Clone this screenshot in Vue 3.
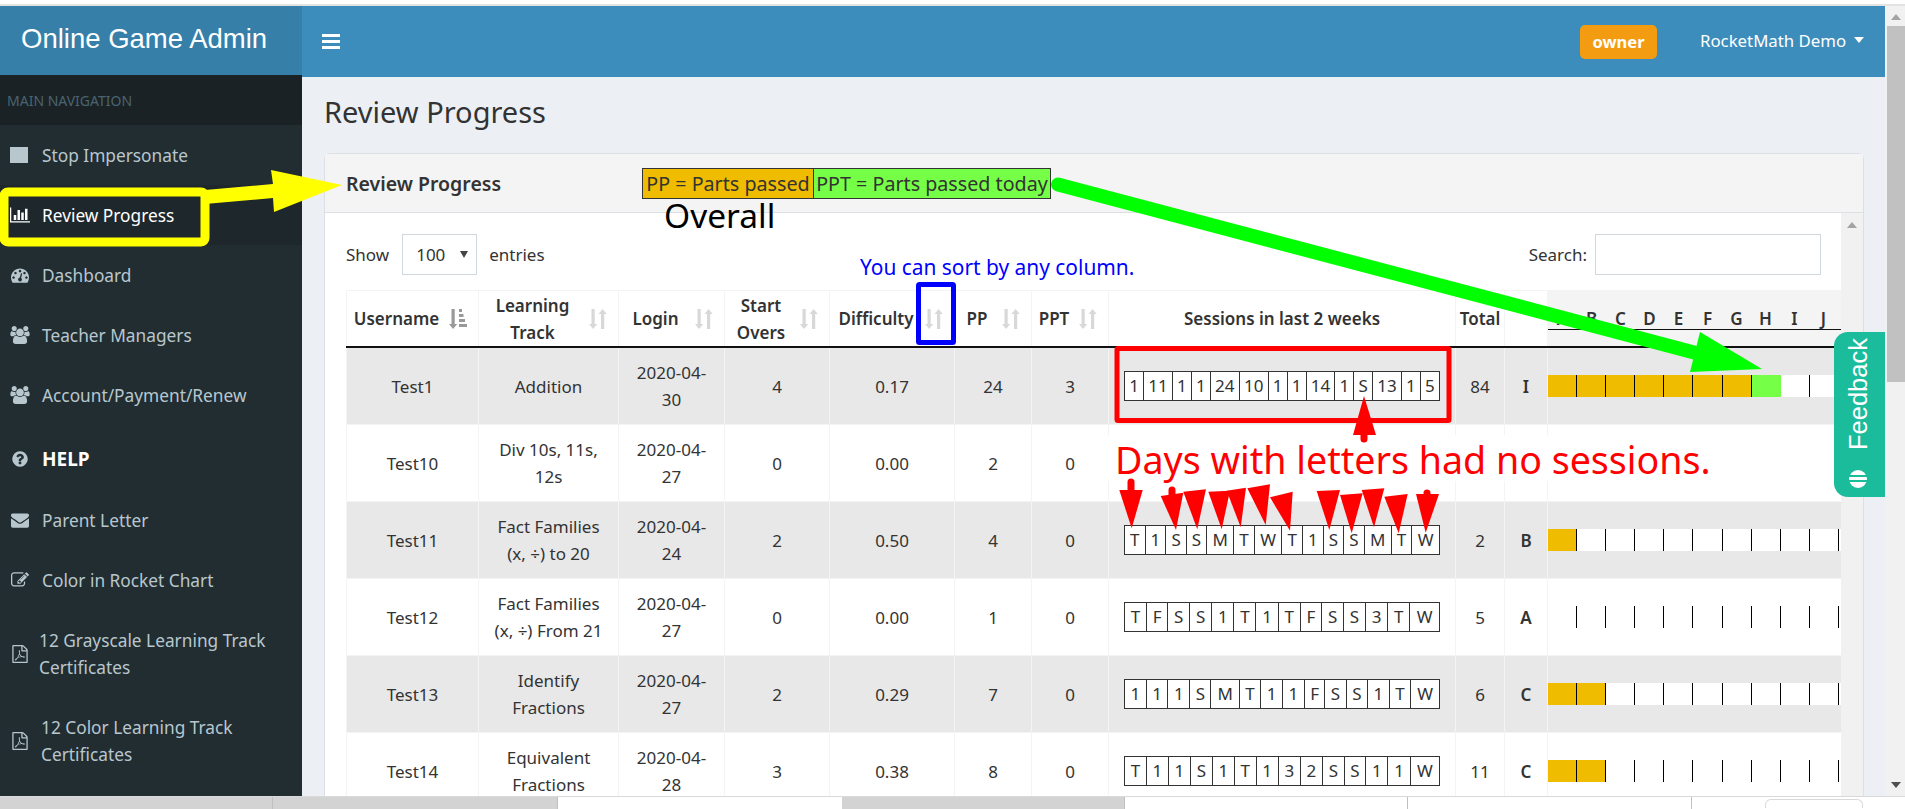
<template>
  <div class="page">
    <div class="top-strip"></div>

    <div class="main">
      <div class="viewport">
        <aside class="sidebar">
          <div class="logo">Online Game Admin</div>
          <div class="nav-header">MAIN NAVIGATION</div>
          <ul class="nav">
            <li
              v-for="item in navItems"
              :key="item.label"
              class="nav-item"
              :class="{ active: item.active, help: item.help, tall: item.tall, shift: item.shift }"
            >
              <span v-if="item.icon === 'square'" class="stop-icon"></span>
              <svg v-else class="nav-icon" :viewBox="icons[item.icon].box">
                <path :d="icons[item.icon].d" />
              </svg>
              <span class="nav-text">{{ item.label }}</span>
            </li>
          </ul>
        </aside>

        <div class="right">
          <header class="navbar">
            <div class="burger"><i></i><i></i><i></i></div>
            <span class="owner">owner</span>
            <div class="user">
              <span>RocketMath Demo</span>
              <span class="caret"></span>
            </div>
          </header>

          <section class="content">
            <h1 class="page-title">Review Progress</h1>
            <div class="box">
              <div class="box-header">
                <h3 class="box-title">Review Progress</h3>
                <span class="legend legend-pp">PP = Parts passed</span>
                <span class="legend legend-ppt">PPT = Parts passed today</span>
              </div>
              <div class="box-body">
                <div class="table-area">
                  <div class="controls">
                    <span>Show</span>
                    <div class="select"><span>100</span><i class="select-arrow"></i></div>
                    <span>entries</span>
                    <span class="search-label">Search:</span>
                    <input class="search" type="text" />
                  </div>

                  <table class="grid">
                    <colgroup>
                      <col v-for="(w, i) in colWidths" :key="i" :style="{ width: w + 'px' }" />
                    </colgroup>
                    <thead>
                      <tr>
                        <th v-for="col in sortCols" :key="col.label">
                          <div class="th-sort">
                            <span class="th-label">{{ col.label }}</span>
                            <svg class="sort-icon" :class="{ current: col.current }" viewBox="0 0 18 20">
                              <path d="M2.500 0h3.200v15h2.500l-4.100 5-4.100-5h2.500z" />
                              <path v-if="col.current" d="M10 0h3v3h-3zM10 5h4.500v3H10zM10 10h6v3h-6zM10 15h8v3h-8z" />
                              <path v-else d="M12 20h3.200V5h2.500l-4.100-5-4.100 5H12z" />
                            </svg>
                          </div>
                        </th>
                        <th>Sessions in last 2 weeks</th>
                        <th>Total</th>
                        <th></th>
                        <th class="th-bars">
                          <div class="bar-letters">
                            <span v-for="l in barLetters" :key="l">{{ l }}</span>
                          </div>
                        </th>
                      </tr>
                    </thead>
                    <tbody>
                      <tr v-for="row in rows" :key="row.user" :class="{ striped: row.striped }">
                        <td>{{ row.user }}</td>
                        <td>{{ row.track }}</td>
                        <td>{{ row.login.slice(0, 8) }}<br />{{ row.login.slice(8) }}</td>
                        <td>{{ row.starts }}</td>
                        <td>{{ row.diff }}</td>
                        <td>{{ row.pp }}</td>
                        <td>{{ row.ppt }}</td>
                        <td class="td-sessions">
                          <table v-if="row.sessions.length" class="sessions">
                            <tbody>
                              <tr>
                                <td v-for="(s, i) in row.sessions" :key="i">{{ s }}</td>
                              </tr>
                            </tbody>
                          </table>
                        </td>
                        <td>{{ row.total }}</td>
                        <td class="td-letter">{{ row.letter }}</td>
                        <td class="td-bars">
                          <div v-if="row.letter" class="bar">
                            <i
                              v-for="n in 10"
                              :key="n"
                              :class="{ gold: n <= row.gold, today: n > row.gold && n <= row.gold + row.today }"
                            ></i>
                          </div>
                        </td>
                      </tr>
                    </tbody>
                  </table>
                </div>
                <div class="inner-scroll"><i class="arrow-up"></i></div>
              </div>
            </div>
          </section>
        </div>
      </div>

      <div class="page-scroll">
        <i class="arrow-up"></i>
        <div class="page-thumb"></div>
        <i class="arrow-down"></i>
      </div>
    </div>

    <footer class="bottom-bar">
      <span class="tab grey" style="width: 273px"></span>
      <span class="tab grey" style="width: 285px"></span>
      <span class="tab" style="width: 284px"></span>
      <span class="tab grey" style="width: 283px"></span>
      <span class="tab sep" style="width: 283px"></span>
      <span class="tab sep" style="width: 284px"></span>
      <span class="pill"></span>
    </footer>

    <!-- annotations drawn on top of the screenshot -->
    <div class="note note-overall">Overall</div>
    <div class="note note-sort">You can sort by any column.</div>
    <div class="note note-days">Days with letters had no sessions.</div>

    <svg class="overlay" viewBox="0 0 1905 809">
      <rect x="4" y="192" width="201" height="50" rx="4" fill="none" stroke="#ffff00" stroke-width="9" />
      <polygon points="205,190 273,184 271,170 342,185 274,212 273,198 205,204" fill="#ffff00" />

      <line x1="1058" y1="184.500" x2="1696" y2="353" stroke="#00ff00" stroke-width="14" stroke-linecap="round" />
      <polygon points="1700,332 1762,369 1690,372" fill="#00ff00" />

      <rect x="918.500" y="284.500" width="35" height="58" rx="1" fill="none" stroke="#0000ff" stroke-width="5" />
      <rect x="1117" y="348.500" width="332" height="72" rx="1" fill="none" stroke="#ff0000" stroke-width="5" />

      <line x1="1364" y1="430" x2="1364" y2="439" stroke="#ff0000" stroke-width="7" stroke-linecap="round" />
      <polygon points="1364,396 1353,435 1376,435" fill="#ff0000" />

      <line v-for="(s, i) in arrowStems" :key="'s' + i" :x1="s[0]" :y1="s[1]" :x2="s[2]" :y2="s[3]" stroke="#ff0000" stroke-width="7" stroke-linecap="round" />
      <polygon v-for="(p, i) in downArrows" :key="i" :points="p" fill="#ff0000" />
    </svg>

    <div class="feedback">
      <span class="feedback-text">Feedback</span>
      <span class="feedback-icon"><i></i><i></i></span>
    </div>
  </div>
</template>

<script setup>
const icons = {
  bars: {
    box: '0 0 2048 1792',
    d: 'M640 896v512h-256v-512h256zm384-512v1024h-256v-1024h256zm1024 1152v128h-2048v-1536h128v1408h1920zm-640-896v768h-256v-768h256zm384-384v1152h-256v-1152h256z'
  },
  dashboard: {
    box: '0 0 1792 1792',
    d: 'M384 1152q0-53-37.500-90.500t-90.500-37.500-90.500 37.500-37.500 90.500 37.500 90.500 90.500 37.500 90.500-37.500 37.500-90.500zm192-448q0-53-37.500-90.500t-90.500-37.500-90.500 37.500-37.500 90.500 37.500 90.500 90.500 37.500 90.500-37.500 37.500-90.500zm428 481l101-382q6-26-7.500-48.500t-38.500-29.500-48 6.500-30 39.500l-101 382q-60 5-107 43.500t-63 98.500q-20 77 20 146t117 89 146-20 89-117q16-60-6-117t-72-91zm660-33q0-53-37.500-90.500t-90.500-37.500-90.500 37.500-37.500 90.500 37.500 90.500 90.500 37.500 90.500-37.500 37.500-90.500zm-640-640q0-53-37.500-90.500t-90.500-37.500-90.500 37.500-37.500 90.500 37.500 90.500 90.500 37.500 90.500-37.500 37.500-90.500zm448 192q0-53-37.500-90.500t-90.500-37.500-90.500 37.500-37.500 90.500 37.500 90.500 90.500 37.500 90.500-37.500 37.500-90.500zm320 448q0 261-141 483-19 29-54 29h-1402q-35 0-54-29-141-221-141-483 0-182 71-348t191-286 286-191 348-71 348 71 286 191 191 286 71 348z'
  },
  users: {
    box: '0 0 1920 1792',
    d: 'M593 896q-162 5-265 128h-134q-82 0-138-40.500t-56-118.500q0-353 124-353 6 0 43.500 21t97.500 42.500 119 21.500q67 0 133-23-5 37-5 66 0 139 81 256zm1071 637q0 120-73 189.500t-194 69.500h-874q-121 0-194-69.500t-73-189.500q0-53 3.500-103.500t14-109 26.500-108.500 43-97.500 62-81 85.500-53.500 111.500-20q10 0 43 21.500t73 48 107 48 135 21.500 135-21.500 107-48 73-48 43-21.500q61 0 111.500 20t85.500 53.500 62 81 43 97.500 26.500 108.500 14 109 3.500 103.500zm-1024-1277q0 106-75 181t-181 75-181-75-75-181 75-181 181-75 181 75 75 181zm704 384q0 159-112.500 271.500t-271.500 112.500-271.500-112.500-112.500-271.500 112.500-271.500 271.500-112.500 271.500 112.500 112.500 271.500zm576 225q0 78-56 118.500t-138 40.500h-134q-103-123-265-128 81-117 81-256 0-29-5-66 66 23 133 23 59 0 119-21.500t97.500-42.500 43.500-21q124 0 124 353zm-128-609q0 106-75 181t-181 75-181-75-75-181 75-181 181-75 181 75 75 181z'
  },
  question: {
    box: '0 0 1792 1792',
    d: 'M1024 1376v-192q0-14-9-23t-23-9h-192q-14 0-23 9t-9 23v192q0 14 9 23t23 9h192q14 0 23-9t9-23zm256-672q0-88-55.500-163t-138.500-116-170-41q-243 0-371 213-15 24 8 42l132 100q7 6 19 6 16 0 25-12 53-68 86-92 34-24 86-24 48 0 85.500 26t37.500 59q0 38-20 61t-68 45q-63 28-115.500 86.500t-52.500 125.500v36q0 14 9 23t23 9h192q14 0 23-9t9-23q0-19 21.500-49.500t54.500-49.500q32-18 49-28.500t46-35 44.500-48 28-60.500 12.500-81zm384 192q0 209-103 385.500t-279.500 279.500-385.500 103-385.500-103-279.500-279.500-103-385.500 103-385.500 279.500-279.500 385.500-103 385.500 103 279.500 279.500 103 385.500z'
  },
  envelope: {
    box: '0 0 1792 1792',
    d: 'M1792 710v794q0 66-47 113t-113 47h-1472q-66 0-113-47t-47-113v-794q44 49 101 87 362 246 497 345 57 42 92.500 65.500t94.500 48 110 24.500h2q51 0 110-24.500t94.500-48 92.500-65.500q170-123 498-345 57-39 100-87zm0-294q0 79-49 151t-122 123q-376 261-468 325-10 7-42.500 30.500t-54 38-52 32.500-57.500 27-50 9h-2q-23 0-50-9t-57.500-27-52-32.500-54-38-42.500-30.500q-91-64-262-182.500t-205-142.500q-62-42-117-115.500t-55-136.500q0-78 41.500-130t118.500-52h1472q65 0 112.500 47t47.500 113z'
  },
  edit: {
    box: '0 0 1792 1792',
    d: 'M888 1184l116-116-152-152-116 116v56h96v96h56zm440-720q-16-16-33 1l-350 350q-17 17-1 33t33-1l350-350q17-17 1-33zm80 594v190q0 119-84.500 203.500t-203.500 84.500h-832q-119 0-203.500-84.500t-84.500-203.500v-832q0-119 84.500-203.500t203.500-84.500h832q63 0 117 25 15 7 18 23 3 17-9 29l-49 49q-14 14-32 8-23-6-45-6h-832q-66 0-113 47t-47 113v832q0 66 47 113t113 47h832q66 0 113-47t47-113v-126q0-13 9-22l64-64q15-15 35-7t20 29zm-96-738l288 288-672 672h-288v-288zm444 132l-92 92-288-288 92-92q28-28 68-28t68 28l152 152q28 28 28 68t-28 68z'
  },
  pdf: {
    box: '0 0 1792 1792',
    d: 'M1596 380q28 28 48 76t20 88v1152q0 40-28 68t-68 28h-1344q-40 0-68-28t-28-68v-1600q0-40 28-68t68-28h896q40 0 88 20t76 48zm-444-244v376h376q-10-29-22-41l-313-313q-12-12-41-22zm384 1528v-1024h-416q-40 0-68-28t-28-68v-416h-768v1536h1280zm-514-593q33 26 84 56 59-7 117-7 147 0 177 49 16 22 2 52 0 1-1 2l-2 2v1q-6 38-71 38-48 0-115-20t-130-53q-221 24-392 83-153 262-242 262-15 0-28-7l-24-12q-1-1-6-5-10-10-6-36 9-40 56-91.500t132-96.500q14-9 23 6 2 2 2 4 52-85 107-197 68-136 104-262-24-82-30.500-159.500t6.500-127.500q11-40 42-40h22q23 0 35 15 18 21 9 68-2 6-4 8 1 3 1 8v30q-2 123-14 192 55 164 146 238zm-576 411q52-24 137-158-51 40-87.500 84t-49.500 74zm398-920q-15 42-2 132 1-7 7-44 0-3 7-43 1-4 4-8-1-1-1-2-1-2-1-3-1-22-13-36 0 1-1 2v2zm-124 661q135-54 284-81-2-1-13-9.500t-16-13.500q-76-67-127-176-27 86-83 197-30 56-45 83zm646-16q-24-24-140-24 76 28 124 28 14 0 18-1 0-1-2-3z'
  }
}

const navItems = [
  { label: 'Stop Impersonate', icon: 'square' },
  { label: 'Review Progress', icon: 'bars', active: true },
  { label: 'Dashboard', icon: 'dashboard' },
  { label: 'Teacher Managers', icon: 'users' },
  { label: 'Account/Payment/Renew', icon: 'users' },
  { label: 'HELP', icon: 'question', help: true },
  { label: 'Parent Letter', icon: 'envelope' },
  { label: 'Color in Rocket Chart', icon: 'edit' },
  { label: '12 Grayscale Learning Track Certificates', icon: 'pdf', tall: true, shift: true },
  { label: '12 Color Learning Track Certificates', icon: 'pdf', tall: true }
]

const colWidths = [132, 140, 106, 105, 125, 77, 77, 347, 49, 43, 295]

const sortCols = [
  { label: 'Username', current: true },
  { label: 'Learning Track' },
  { label: 'Login' },
  { label: 'Start Overs' },
  { label: 'Difficulty' },
  { label: 'PP' },
  { label: 'PPT' }
]

const barLetters = ['A', 'B', 'C', 'D', 'E', 'F', 'G', 'H', 'I', 'J']

const rows = [
  { user: 'Test1', track: 'Addition', login: '2020-04-30', starts: 4, diff: '0.17', pp: 24, ppt: 3, sessions: [1, 11, 1, 1, 24, 10, 1, 1, 14, 1, 'S', 13, 1, 5], total: 84, letter: 'I', gold: 7, today: 1, striped: true },
  // the big red note covers the sessions and bars of this row
  { user: 'Test10', track: 'Div 10s, 11s, 12s', login: '2020-04-27', starts: 0, diff: '0.00', pp: 2, ppt: 0, sessions: [], total: '', letter: '', gold: 0, today: 0 },
  { user: 'Test11', track: 'Fact Families (x, ÷) to 20', login: '2020-04-24', starts: 2, diff: '0.50', pp: 4, ppt: 0, sessions: ['T', 1, 'S', 'S', 'M', 'T', 'W', 'T', 1, 'S', 'S', 'M', 'T', 'W'], total: 2, letter: 'B', gold: 1, today: 0, striped: true },
  { user: 'Test12', track: 'Fact Families (x, ÷) From 21', login: '2020-04-27', starts: 0, diff: '0.00', pp: 1, ppt: 0, sessions: ['T', 'F', 'S', 'S', 1, 'T', 1, 'T', 'F', 'S', 'S', 3, 'T', 'W'], total: 5, letter: 'A', gold: 0, today: 0 },
  { user: 'Test13', track: 'Identify Fractions', login: '2020-04-27', starts: 2, diff: '0.29', pp: 7, ppt: 0, sessions: [1, 1, 1, 'S', 'M', 'T', 1, 1, 'F', 'S', 'S', 1, 'T', 'W'], total: 6, letter: 'C', gold: 2, today: 0, striped: true },
  { user: 'Test14', track: 'Equivalent Fractions', login: '2020-04-28', starts: 3, diff: '0.38', pp: 8, ppt: 0, sessions: ['T', 1, 1, 'S', 1, 'T', 1, 3, 2, 'S', 'S', 1, 1, 'W'], total: 11, letter: 'C', gold: 2, today: 0 }
]

const downArrows = [
  '1119.300,490 1142.700,490 1131.700,528.300',
  '1160.700,496 1183.300,492.700 1176,530',
  '1183.300,491.700 1206,489.300 1197.300,529.300',
  '1208.300,491.700 1230,490.700 1221.700,529.300',
  '1226.700,490.700 1246,487.700 1240.700,527.300',
  '1247.300,488.300 1270,484.300 1265.700,525',
  '1270,497.300 1292.700,491.700 1290,530.700',
  '1316.700,491 1340,490 1329.300,530',
  '1340,495 1362.700,493.300 1351.700,533.300',
  '1361.700,490 1384.300,488.300 1374,527.300',
  '1384.300,496.700 1407.700,494 1398.700,533.300',
  '1416,494 1439,494 1425.700,532.700'
]

const arrowStems = [
  [1131, 482, 1131, 492],
  [1172, 490, 1172, 498],
  [1427, 493, 1427, 498]
]
</script>

<style>
html,
body {
  margin: 0;
  background: #fff;
}
</style>

<style scoped>
.page {
  position: relative;
  width: 1905px;
  height: 809px;
  overflow: hidden;
  display: flex;
  flex-direction: column;
  background: #fff;
  font-family: 'Noto Sans', Lato, sans-serif;
  font-size: 17px;
  line-height: 27px;
  color: #333;
}

.top-strip {
  height: 4px;
  flex-shrink: 0;
  border-bottom: 2px solid #e3e3e3;
}

.main {
  flex: 1;
  min-height: 0;
  display: flex;
}

.viewport {
  flex: 1;
  min-width: 0;
  display: flex;
}

/* sidebar */
.sidebar {
  width: 302px;
  flex-shrink: 0;
  background: #222d32;
  color: #b8c7ce;
}

.logo {
  height: 69px;
  display: flex;
  align-items: center;
  padding-left: 21px;
  padding-bottom: 4px;
  box-sizing: border-box;
  background: #367fa9;
  color: #fff;
  font-family: 'Liberation Sans', Arial, sans-serif;
  font-size: 27.500px;
}

.nav-header {
  height: 50px;
  display: flex;
  align-items: center;
  padding-left: 7px;
  background: #1a2226;
  color: #4b646f;
  font-size: 14px;
}

.nav {
  list-style: none;
  margin: 0;
  padding: 0;
}

.nav-item {
  height: 60px;
  display: flex;
  align-items: center;
  padding-left: 10px;
  box-sizing: border-box;
  font-size: 17.300px;
}

.nav-item.active {
  background: #1e282c;
  color: #fff;
}

.nav-item.help {
  height: 62px;
  margin-top: 3px;
  color: #fff;
  font-weight: 700;
  font-size: 19px;
}

.nav-item.tall {
  height: 87px;
}

.nav-icon {
  width: 20px;
  height: 18px;
  flex-shrink: 0;
  fill: currentColor;
}

.nav-item.help .nav-icon {
  fill: #b8c7ce;
}

.nav-text {
  margin-left: 12px;
}

.nav-item.tall .nav-text {
  margin-left: 11px;
}

.nav-item.shift .nav-text {
  margin-left: 9px;
}

.stop-icon {
  width: 18px;
  height: 16px;
  flex-shrink: 0;
  margin-right: 2px;
  background: #b8c7ce;
}

/* top bar */
.right {
  flex: 1;
  min-width: 0;
  display: flex;
  flex-direction: column;
}

.navbar {
  height: 71px;
  flex-shrink: 0;
  display: flex;
  align-items: center;
  padding: 0 21px 0 20px;
  background: #3c8dbc;
  color: #fff;
}

.burger {
  width: 18px;
  margin-right: auto;
  display: flex;
  flex-direction: column;
  gap: 3px;
}

.burger i {
  display: block;
  height: 3px;
  background: #fff;
}

.owner {
  width: 77px;
  height: 34px;
  display: flex;
  align-items: center;
  justify-content: center;
  border-radius: 5px;
  background: #f39c12;
  font-weight: 700;
  font-size: 16.500px;
}

.user {
  width: 164px;
  margin-left: 43px;
  margin-top: -3px;
  display: flex;
  align-items: center;
  justify-content: space-between;
  white-space: nowrap;
  font-size: 16.800px;
}

.caret {
  width: 0;
  height: 0;
  border-left: 5px solid transparent;
  border-right: 5px solid transparent;
  border-top: 6px solid #fff;
}

/* content */
.content {
  flex: 1;
  min-height: 0;
  display: flex;
  flex-direction: column;
  padding: 15px 21px 0 22px;
  background: #ecf0f5;
}

.page-title {
  margin: 0 0 21px;
  font-weight: 400;
  font-size: 29px;
  line-height: 40px;
}

.box {
  flex: 1;
  min-height: 0;
  display: flex;
  flex-direction: column;
  border: 1px solid #dcdfe4;
  border-bottom: 0;
  border-radius: 6px 6px 0 0;
  background: #fff;
}

.box-header {
  height: 59px;
  flex-shrink: 0;
  display: flex;
  align-items: center;
  box-sizing: border-box;
  padding-left: 21px;
  border-bottom: 1px solid #dcdfe4;
  background: #f4f4f4;
}

.box-title {
  width: 296px;
  margin: 0;
  font-size: 19.500px;
  font-weight: 600;
}

.legend {
  height: 31px;
  display: flex;
  align-items: center;
  justify-content: center;
  box-sizing: border-box;
  border: 1px solid #333;
  font-size: 19.700px;
  white-space: nowrap;
}

.legend-pp {
  width: 172px;
  background: #f0bc00;
}

.legend-ppt {
  width: 238px;
  margin-left: -1px;
  background: #76ff47;
}

.box-body {
  flex: 1;
  min-height: 0;
  display: flex;
}

.table-area {
  flex: 1;
  min-width: 0;
  padding: 21px 0 0 21px;
  overflow: hidden;
}

.controls {
  height: 41px;
  margin-bottom: 15px;
  padding-right: 20px;
  display: flex;
  align-items: center;
}

.select {
  position: relative;
  width: 75px;
  height: 41px;
  margin: 0 12px 0 13px;
  box-sizing: border-box;
  padding-left: 13px;
  display: flex;
  align-items: center;
  border: 1px solid #d2d6de;
}

.select-arrow {
  position: absolute;
  right: 8px;
  top: 16px;
  border-left: 4px solid transparent;
  border-right: 4px solid transparent;
  border-top: 7px solid #444;
}

.search-label {
  margin-left: auto;
  margin-right: 8px;
}

.search {
  width: 226px;
  height: 41px;
  box-sizing: border-box;
  border: 1px solid #d2d6de;
  background: #fff;
}

/* main table */
.grid {
  width: 1496px;
  table-layout: fixed;
  border-collapse: collapse;
}

.grid > thead > tr > th {
  height: 55px;
  padding: 0;
  border: 1px solid #f4f4f4;
  border-bottom: 2px solid #111;
  text-align: center;
  font-weight: 600;
}

.th-sort {
  display: flex;
  align-items: center;
  padding: 0 11px 0 5px;
}

.th-label {
  flex: 1;
  min-width: 0;
  text-align: center;
}

.sort-icon {
  width: 18px;
  height: 20px;
  margin-left: 8px;
  flex-shrink: 0;
  fill: #d8d8d8;
}

.sort-icon.current {
  fill: #999;
}

.grid > thead > tr > th.th-bars {
  vertical-align: top;
  background: #f4f4f4;
}

.bar-letters {
  height: 39px;
  padding-top: 17px;
  box-sizing: border-box;
  display: flex;
  border-bottom: 1.500px solid #111;
}

.bar-letters span {
  width: 29px;
  display: flex;
  align-items: center;
  justify-content: center;
}

.grid > tbody > tr > td {
  height: 76px;
  padding: 0 14px;
  border: 1px solid #f4f4f4;
  text-align: center;
}

.grid > tbody > tr.striped > td {
  background: #e8e8e8;
}

.grid > tbody > tr > td.td-sessions {
  padding: 0 15px;
}

.grid > tbody > tr > td.td-letter {
  padding: 0;
  font-weight: 600;
}

.grid > tbody > tr > td.td-bars {
  padding: 0;
}

.sessions {
  width: 100%;
  border-collapse: collapse;
}

.sessions td {
  height: 28px;
  padding: 0 4px;
  border: 1px solid #333;
  background: #fff;
  line-height: 28px;
  text-align: center;
}

.bar {
  height: 22px;
  display: flex;
  background: #fff;
}

.bar i {
  width: 29.100px;
  height: 22px;
  flex-shrink: 0;
  box-sizing: border-box;
  border-right: 1px solid #000;
}

.bar i.gold {
  background: #f0bc00;
}

.bar i.today {
  background: #76ff47;
  border-right: 0;
}

/* scrollbars */
.inner-scroll {
  width: 22px;
  flex-shrink: 0;
  display: flex;
  justify-content: center;
  padding-top: 9px;
  box-sizing: border-box;
  background: #f1f1f1;
}

.page-scroll {
  width: 20px;
  flex-shrink: 0;
  position: relative;
  display: flex;
  flex-direction: column;
  align-items: center;
  box-sizing: border-box;
  padding: 8px 0 8px 2px;
  background: #f1f1f1;
}

.page-thumb {
  width: 100%;
  height: 356px;
  margin-top: 6px;
  margin-bottom: auto;
  background: #c1c1c1;
}

.arrow-up {
  display: block;
  width: 0;
  height: 0;
  border-left: 5px solid transparent;
  border-right: 5px solid transparent;
  border-bottom: 6px solid #a3a3a3;
}

.arrow-down {
  display: block;
  width: 0;
  height: 0;
  border-left: 5px solid transparent;
  border-right: 5px solid transparent;
  border-top: 6px solid #505050;
}

/* strip along the bottom */
.bottom-bar {
  height: 13px;
  flex-shrink: 0;
  display: flex;
  box-sizing: border-box;
  border-top: 1px solid #d9d9d9;
}

.tab {
  height: 100%;
  flex-shrink: 0;
  box-sizing: border-box;
}

.tab.grey {
  background: #d3d3d3;
  border-right: 1px solid #c0c0c0;
}

.tab.sep {
  border-right: 1px solid #c0c0c0;
}

.pill {
  width: 96px;
  height: 8px;
  margin: 2px 0 0 73px;
  border: 1px solid #d9d9d9;
  border-bottom: 0;
  border-radius: 6px 6px 0 0;
}

/* annotations */
.overlay {
  position: absolute;
  left: 0;
  top: 0;
  width: 1905px;
  height: 809px;
  pointer-events: none;
}

.note {
  position: absolute;
  white-space: nowrap;
}

.note-overall {
  left: 664px;
  top: 199px;
  font-size: 33.500px;
  line-height: 32px;
  color: #000;
}

.note-sort {
  left: 860px;
  top: 251px;
  font-size: 20.900px;
  line-height: 32px;
  color: #0000ff;
}

.note-days {
  left: 1100px;
  top: 435px;
  width: 727px;
  height: 46px;
  padding-left: 15px;
  background: #fff;
  font-size: 37.600px;
  line-height: 50px;
  color: #ff0000;
}

.feedback {
  position: absolute;
  left: 1834px;
  top: 332px;
  width: 51px;
  height: 165px;
  box-sizing: border-box;
  padding: 6px 4px 0 0;
  display: flex;
  flex-direction: column;
  align-items: center;
  border-radius: 14px 0 0 14px;
  background: #1abc9c;
  color: #fff;
  font-family: 'Liberation Sans', Arial, sans-serif;
}

.feedback-text {
  writing-mode: vertical-rl;
  transform: rotate(180deg);
  font-size: 25.500px;
  line-height: 30px;
}

.feedback-icon {
  width: 18px;
  height: 18px;
  margin-top: 20px;
  padding-top: 5px;
  box-sizing: border-box;
  border-radius: 50%;
  background: #fff;
}

.feedback-icon i {
  display: block;
  height: 2px;
  margin: 0 0 3px;
  background: #1abc9c;
}
</style>
